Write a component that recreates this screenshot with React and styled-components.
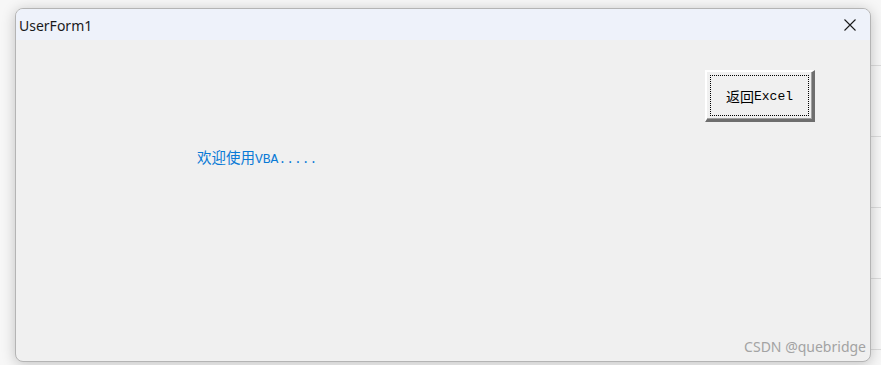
import React from 'react';
import styled, { createGlobalStyle } from 'styled-components';

const GlobalStyle = createGlobalStyle`
  html, body {
    margin: 0;
    padding: 0;
  }
  body {
    width: 881px;
    height: 365px;
    overflow: hidden;
    background-color: #f7f7f7;
    background-image: repeating-linear-gradient(
      to bottom,
      transparent 0px,
      transparent 64px,
      #dcdcdc 64px,
      #dcdcdc 65px,
      transparent 65px,
      transparent 71px
    );
    background-size: 12px 71px;
    background-position: 871px 1px;
    background-repeat: repeat-y;
  }
`;

const Stage = styled.div`
  padding: 8px 0 0 15px;
`;

const Window = styled.div`
  width: 856px;
  height: 354px;
  box-sizing: border-box;
  border: 1px solid #b4b4b4;
  border-radius: 8px;
  background: #f0f0f0;
  box-shadow: 0 2px 14px rgba(0, 0, 0, 0.22);
  display: flex;
  flex-direction: column;
  overflow: hidden;
`;

const TitleBar = styled.div`
  height: 31px;
  background: #eef2fa;
  display: flex;
  align-items: center;
  justify-content: space-between;
  padding: 0 14px 0 3px;
  font-family: 'Noto Sans', 'Liberation Sans', sans-serif;
  font-size: 14px;
  color: #1a1a1a;
`;

const Title = styled.span`
  padding-top: 1px;
`;

const CloseIcon = styled.svg`
  width: 12px;
  height: 12px;
  display: block;
`;

const Body = styled.div`
  flex: 1;
  display: flex;
  flex-direction: column;
  position: relative;
`;

const TopRow = styled.div`
  display: flex;
  justify-content: flex-end;
  padding: 30px 55px 0 0;
`;

const Button = styled.button`
  width: 110px;
  height: 52px;
  box-sizing: border-box;
  padding: 3px;
  background: #f0f0f0;
  border: none;
  border-top: 2px solid #ffffff;
  border-left: 2px solid #ffffff;
  border-right: 3px solid #6e6e6e;
  border-bottom: 3px solid #6e6e6e;
  box-shadow: inset -1px -1px 0 #a0a0a0;
  display: flex;
  cursor: default;
`;

const FocusRect = styled.span`
  flex: 1;
  border: 1px dotted #000;
  display: flex;
  align-items: center;
  justify-content: center;
  font-family: 'Liberation Mono', 'Noto Sans CJK SC', monospace;
  font-size: 13px;
  color: #000;
  padding-top: 1px;
`;

const Cjk = styled.span`
  font-family: 'Noto Sans CJK SC', sans-serif;
  font-size: ${p => p.size || 14}px;
  line-height: 1;
`;

const Label = styled.div`
  margin: 28px 0 0 181px;
  font-family: 'Liberation Mono', 'Noto Sans CJK SC', monospace;
  font-size: 13px;
  color: #0a7ad6;
  display: flex;
  align-items: baseline;
`;

const Watermark = styled.div`
  position: absolute;
  right: 4px;
  bottom: 5px;
  font-family: 'Noto Sans', 'Liberation Sans', sans-serif;
  font-size: 14px;
  color: #a3a3a3;
`;

export default function App() {
  return (
    <>
      <GlobalStyle />
      <Stage>
        <Window>
          <TitleBar>
            <Title>UserForm1</Title>
            <CloseIcon viewBox="0 0 12 12">
              <path d="M0.5 0.5 L11.5 11.5 M11.5 0.5 L0.5 11.5" stroke="#1a1a1a" strokeWidth="1.1" fill="none" />
            </CloseIcon>
          </TitleBar>
          <Body>
            <TopRow>
              <Button>
                <FocusRect>
                  <Cjk>返回</Cjk>Excel
                </FocusRect>
              </Button>
            </TopRow>
            <Label>
              <Cjk size={14.5}>欢迎使用</Cjk>VBA.....
            </Label>
            <Watermark>CSDN @quebridge</Watermark>
          </Body>
        </Window>
      </Stage>
    </>
  );
}
